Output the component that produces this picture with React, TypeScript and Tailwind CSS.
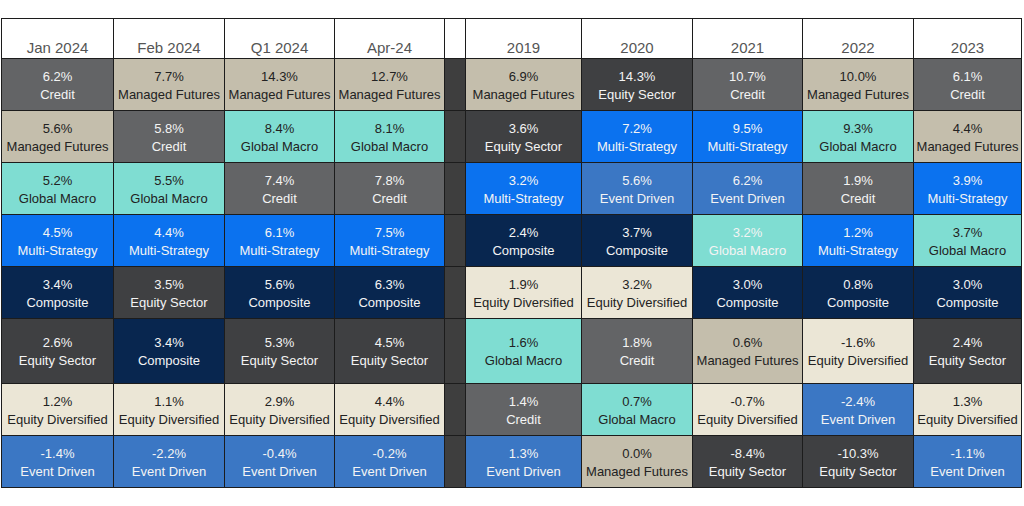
type Strategy =
  | 'Credit'
  | 'Managed Futures'
  | 'Global Macro'
  | 'Multi-Strategy'
  | 'Composite'
  | 'Equity Sector'
  | 'Equity Diversified'
  | 'Event Driven';

const styles: Record<Strategy, string> = {
  Credit: 'bg-[#636466] text-[#f4f4f4]',
  'Managed Futures': 'bg-[#c4beac] text-[#222222]',
  'Global Macro': 'bg-[#7fddd2] text-[#222222]',
  'Multi-Strategy': 'bg-[#0b72ef] text-[#f4f4f4]',
  Composite: 'bg-[#08264f] text-[#f4f4f4]',
  'Equity Sector': 'bg-[#3f4042] text-[#f4f4f4]',
  'Equity Diversified': 'bg-[#ebe6d6] text-[#222222]',
  'Event Driven': 'bg-[#3b77c4] text-[#f4f4f4]',
};

type Cell = [string, Strategy, boolean?];

const columns: { title: string; cells: Cell[] }[] = [
  {
    title: 'Jan 2024',
    cells: [
      ['6.2%', 'Credit'],
      ['5.6%', 'Managed Futures'],
      ['5.2%', 'Global Macro'],
      ['4.5%', 'Multi-Strategy'],
      ['3.4%', 'Composite'],
      ['2.6%', 'Equity Sector'],
      ['1.2%', 'Equity Diversified'],
      ['-1.4%', 'Event Driven'],
    ],
  },
  {
    title: 'Feb 2024',
    cells: [
      ['7.7%', 'Managed Futures'],
      ['5.8%', 'Credit'],
      ['5.5%', 'Global Macro'],
      ['4.4%', 'Multi-Strategy'],
      ['3.5%', 'Equity Sector'],
      ['3.4%', 'Composite'],
      ['1.1%', 'Equity Diversified'],
      ['-2.2%', 'Event Driven'],
    ],
  },
  {
    title: 'Q1 2024',
    cells: [
      ['14.3%', 'Managed Futures'],
      ['8.4%', 'Global Macro'],
      ['7.4%', 'Credit'],
      ['6.1%', 'Multi-Strategy'],
      ['5.6%', 'Composite'],
      ['5.3%', 'Equity Sector'],
      ['2.9%', 'Equity Diversified'],
      ['-0.4%', 'Event Driven'],
    ],
  },
  {
    title: 'Apr-24',
    cells: [
      ['12.7%', 'Managed Futures'],
      ['8.1%', 'Global Macro'],
      ['7.8%', 'Credit'],
      ['7.5%', 'Multi-Strategy'],
      ['6.3%', 'Composite'],
      ['4.5%', 'Equity Sector'],
      ['4.4%', 'Equity Diversified'],
      ['-0.2%', 'Event Driven'],
    ],
  },
  { title: '', cells: [] },
  {
    title: '2019',
    cells: [
      ['6.9%', 'Managed Futures'],
      ['3.6%', 'Equity Sector'],
      ['3.2%', 'Multi-Strategy'],
      ['2.4%', 'Composite'],
      ['1.9%', 'Equity Diversified'],
      ['1.6%', 'Global Macro'],
      ['1.4%', 'Credit'],
      ['1.3%', 'Event Driven'],
    ],
  },
  {
    title: '2020',
    cells: [
      ['14.3%', 'Equity Sector'],
      ['7.2%', 'Multi-Strategy'],
      ['5.6%', 'Event Driven'],
      ['3.7%', 'Composite'],
      ['3.2%', 'Equity Diversified'],
      ['1.8%', 'Credit'],
      ['0.7%', 'Global Macro'],
      ['0.0%', 'Managed Futures'],
    ],
  },
  {
    title: '2021',
    cells: [
      ['10.7%', 'Credit'],
      ['9.5%', 'Multi-Strategy'],
      ['6.2%', 'Event Driven'],
      ['3.2%', 'Global Macro', true],
      ['3.0%', 'Composite'],
      ['0.6%', 'Managed Futures'],
      ['-0.7%', 'Equity Diversified'],
      ['-8.4%', 'Equity Sector'],
    ],
  },
  {
    title: '2022',
    cells: [
      ['10.0%', 'Managed Futures'],
      ['9.3%', 'Global Macro'],
      ['1.9%', 'Credit'],
      ['1.2%', 'Multi-Strategy'],
      ['0.8%', 'Composite'],
      ['-1.6%', 'Equity Diversified'],
      ['-2.4%', 'Event Driven'],
      ['-10.3%', 'Equity Sector'],
    ],
  },
  {
    title: '2023',
    cells: [
      ['6.1%', 'Credit'],
      ['4.4%', 'Managed Futures'],
      ['3.9%', 'Multi-Strategy'],
      ['3.7%', 'Global Macro'],
      ['3.0%', 'Composite'],
      ['2.4%', 'Equity Sector'],
      ['1.3%', 'Equity Diversified'],
      ['-1.1%', 'Event Driven'],
    ],
  },
];

export default function App() {
  const rows = [0, 1, 2, 3, 4, 5, 6, 7];

  return (
    <div className="w-[1024px] h-[506px] bg-white pt-[18px] pl-px font-['Liberation_Sans',Arial,sans-serif]">
      <div className="grid w-max grid-cols-[111px_110px_109px_109px_20px_115px_110px_109px_110px_107px] grid-rows-[39px_repeat(5,51px)_64px_51px_51px] gap-px bg-[#1c1c1c] p-px">
        {/* Header */}
        {columns.map((col, i) => (
          <div
            key={`h-${i}`}
            className="flex items-end justify-center bg-white pb-[2px] text-[15px] leading-[17px] text-[#555555]"
          >
            {col.title}
          </div>
        ))}

        {/* Body */}
        {rows.map(r =>
          columns.map((col, i) => {
            if (!col.title) {
              return <div key={`g-${r}`} className="bg-[#3e3e3e]" />;
            }
            const [value, name, whiteText] = col.cells[r];
            return (
              <div
                key={`${i}-${r}`}
                className={`flex flex-col items-center justify-center pt-[2px] text-[13px] leading-[18px] whitespace-nowrap ${styles[name]} ${
                  whiteText ? '!text-[#f4f4f4]' : ''
                }`}
              >
                <span>{value}</span>
                <span>{name}</span>
              </div>
            );
          })
        )}
      </div>
    </div>
  );
}
